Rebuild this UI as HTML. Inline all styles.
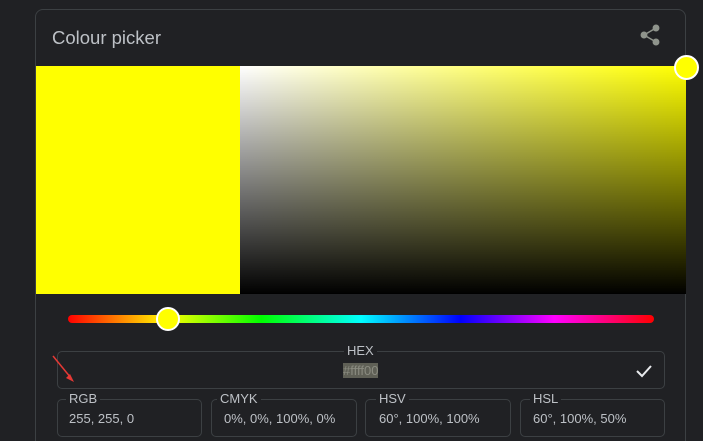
<!DOCTYPE html>
<html style="height:441px;overflow:hidden"><head><style>
body{margin:0;width:703px;height:441px;background:#202124;overflow:hidden;font-family:"Liberation Sans",Arial,sans-serif;position:relative}
.card{position:absolute;left:35px;top:9px;width:651px;height:440px;border:1px solid #3c4043;border-radius:8px;box-sizing:border-box}
.title{position:absolute;left:52px;top:27px;font-size:18.5px;color:#bdc1c6}
.sq{position:absolute;left:36px;top:66px;width:204px;height:228px;background:#ffff00}
.grad{position:absolute;left:240px;top:66px;width:446px;height:228px;background:linear-gradient(to bottom,rgba(0,0,0,0),#000),linear-gradient(to right,#fff,#ffff00)}
.thumb{position:absolute;border-radius:50%;background:#ffff00;border:2px solid #fff;box-sizing:border-box}
.hue{position:absolute;left:68px;top:315px;width:586px;height:8px;border-radius:4px;background:linear-gradient(to right,#f00,#ff0 17%,#0f0 33%,#0ff 50%,#00f 67%,#f0f 83%,#f00)}
.fs{position:absolute;border:1px solid #3c4043;border-radius:5px;box-sizing:border-box}
.lab{position:absolute;font-size:13px;color:#bdc1c6;background:#202124;padding:0 3px}
.val{position:absolute;font-size:13px;color:#bdc1c6}
</style></head><body>
<div class="card"></div>
<div class="title">Colour picker</div>
<svg style="position:absolute;left:639px;top:24px" width="22" height="22"><g fill="#8f948c" stroke="#8f948c" stroke-width="1.5"><line x1="17" y1="4" x2="5" y2="11"/><line x1="17" y1="18" x2="5" y2="11"/><circle cx="17" cy="4" r="2.7"/><circle cx="5" cy="11" r="2.7"/><circle cx="17" cy="18" r="2.7"/></g></svg>
<div class="sq"></div><div class="grad"></div>
<div class="thumb" style="left:674px;top:55px;width:25px;height:25px"></div>
<div class="hue"></div>
<div class="thumb" style="left:156px;top:307px;width:24px;height:24px"></div>
<div class="fs" style="left:57px;top:351px;width:608px;height:38px"></div>
<div class="lab" style="left:344px;top:343px">HEX</div>
<div class="val" style="left:343px;top:363px;background:#5f6056;color:#8a8b80">#ffff00</div>
<svg style="position:absolute;left:634px;top:361px" width="20" height="20"><path d="M3 10l5 5 9-10" fill="none" stroke="#e8eaed" stroke-width="2"/></svg>
<svg style="position:absolute;left:50px;top:353px" width="30" height="34"><line x1="3" y1="3" x2="21" y2="25" stroke="#e53935" stroke-width="1.5"/><path d="M24 29l-8-4 4-4z" fill="#e53935"/></svg>
<div class="fs" style="left:57px;top:399px;width:145px;height:38px"></div><div class="lab" style="left:66px;top:391px">RGB</div><div class="val" style="left:69px;top:411px">255, 255, 0</div>
<div class="fs" style="left:211px;top:399px;width:146px;height:38px"></div><div class="lab" style="left:217px;top:391px">CMYK</div><div class="val" style="left:224px;top:411px">0%, 0%, 100%, 0%</div>
<div class="fs" style="left:365px;top:399px;width:146px;height:38px"></div><div class="lab" style="left:376px;top:391px">HSV</div><div class="val" style="left:379px;top:411px">60°, 100%, 100%</div>
<div class="fs" style="left:520px;top:399px;width:145px;height:38px"></div><div class="lab" style="left:530px;top:391px">HSL</div><div class="val" style="left:533px;top:411px">60°, 100%, 50%</div>
</body></html>
